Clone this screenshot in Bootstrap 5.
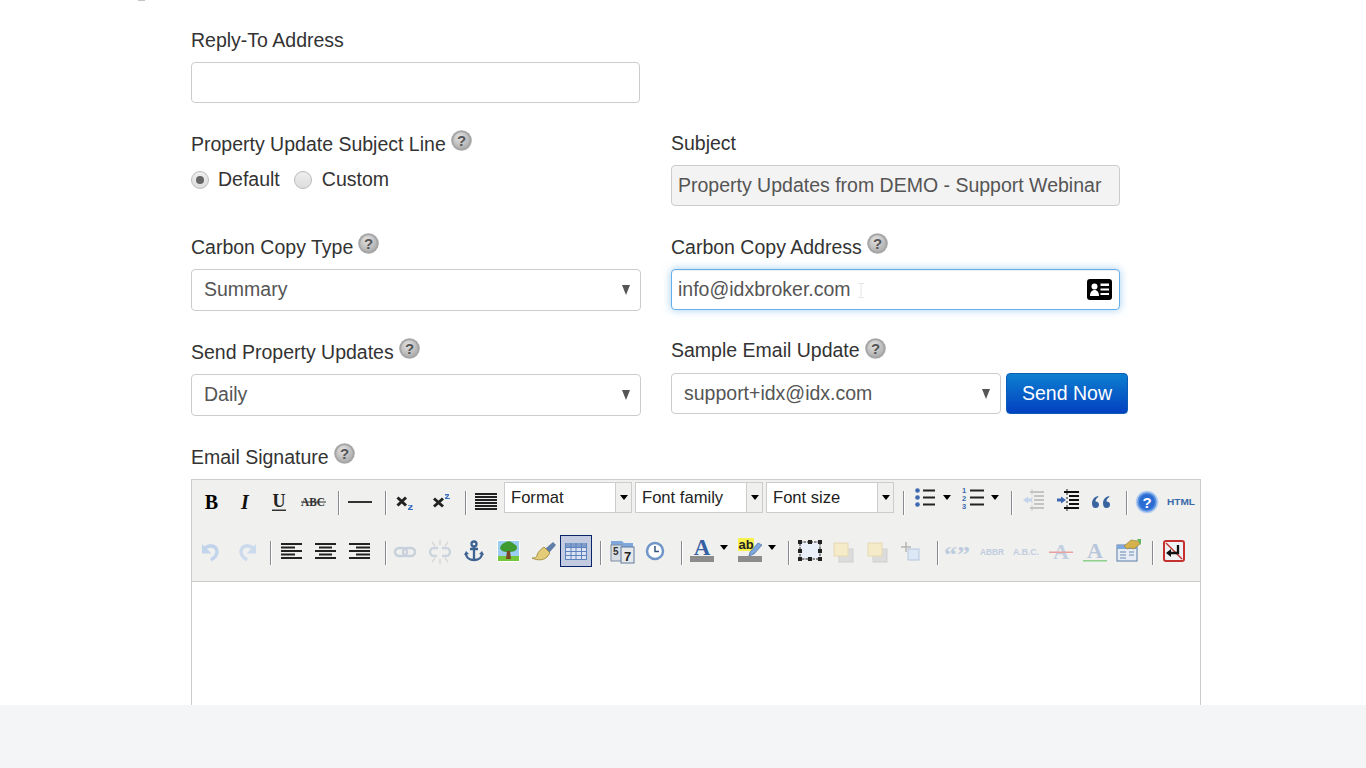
<!DOCTYPE html>
<html lang="en">
<head>
<meta charset="utf-8">
<title>Property Updates</title>
<link href="https://cdn.jsdelivr.net/npm/bootstrap@5.3.0/dist/css/bootstrap.min.css" rel="stylesheet">
<style>
html,body{height:100%;overflow:hidden}
body{font-family:"Liberation Sans",Arial,sans-serif;background:#f4f5f7;color:#333;font-size:19.5px}
.pg-main{position:relative;height:705px;overflow:hidden;background:#fff;padding:28px 0 0 191px}
.pg-crumb{position:absolute;left:138px;top:0;width:7px;height:1px;background:#c4c4c4}
.pg-foot{height:63px;background:#f4f5f7}
.fg-grid{display:grid;grid-template-columns:480px 470px;grid-template-rows:104px 103px 105px 105px}
.fg-up1{margin-top:-1px}
.fg-up2{margin-top:-2px}
.fg-label{display:flex;align-items:center;height:24px;font-size:19.5px;line-height:24px;color:#333;margin:0 0 10px;font-weight:400}
.fg-label-loose{margin-bottom:11px}
.fg-label-loose .qmark{margin-bottom:4px}
.qmark{width:21px;height:21px;margin:0 0 8px 5px;flex:none}
.fld{display:block;height:41px;width:449px;border:1px solid #ccc;border-radius:4px;background:#fff;color:#555;font-size:19.5px;line-height:39px;padding:0 6px}
.fld-ro{background:#f3f3f3}
.fld-focus{border-color:#66afe9;box-shadow:inset 0 1px 1px rgba(0,0,0,.075),0 0 8px rgba(102,175,233,.6);display:flex;align-items:center;justify-content:space-between;padding-right:7px}
.ibeam{margin-left:7px;vertical-align:-2px}
.sel{display:flex;align-items:center;justify-content:space-between;height:42px;width:450px;border:1px solid #ccc;border-radius:4px;background:#fff;color:#555;padding:0 10px 0 12px;font-size:19.5px}
.sel-tri{width:0;height:0;border-left:4.500px solid transparent;border-right:4.500px solid transparent;border-top:10px solid #555}
.sel-short{width:330px;height:41px}
.btn-send{width:122px;height:41px;margin:0 0 0 5px;padding:0 0 2px;border:1px solid #0a5cb4;border-radius:4px;background:linear-gradient(#0d7fd0,#0341c0);color:#fff;font-size:19.5px;line-height:36px}
.rad{display:inline-block;width:18px;height:18px;border-radius:50%;border:1px solid #bbb;background:linear-gradient(#eee,#ddd);flex:none;position:relative}
.rad-on::after{content:"";position:absolute;left:4px;top:4px;width:8px;height:8px;border-radius:50%;background:#666}
.rad-row{height:24px;margin-top:12px;font-size:19.5px;color:#333}
.rad-t{margin-left:9px}
.rad-t2{margin-left:10px}
.rad-2{margin-left:14px}
.ed-wrap{width:1010px;border:1px solid #ccc;background:#fff;height:400px}
.ed-bar{height:102px;background:#f0f0ee;border-bottom:1px solid #ccc;padding:2px 0 0 2px}
.ed-row{display:flex;align-items:flex-start;height:50px}
.tico{display:block;width:34px;height:30px;flex:none;margin-top:4px}
.tico text{font-family:"Liberation Serif",serif}
.tico .sans{font-family:"Liberation Sans",sans-serif}
.tico-33{width:33px}
.tico-32{width:32px}
.tico-a{background:#c2cbe0;outline:1px solid #0a246a;outline-offset:-1px;height:32px;margin-top:3px}
.tsep{width:2px;height:24px;margin:9px 3px 0 8px;flex:none;background:linear-gradient(90deg,#8a8a90 0 1px,#fff 1px)}
.tsep-6{margin-left:6px}
.tsep-12{margin-left:12px}
.tsel{display:flex;width:128px;height:31px;margin-right:3px;background:#fff;border:1px solid #ccc;font-size:16.6px;line-height:29px;color:#222;flex:none}
.tsel-t{flex:1;padding-left:6px}
.tsel-b{width:16px;background:#f0f0ee;border-left:1px solid #ccc;display:flex;align-items:center;justify-content:center}
.tcar{width:0;height:0;border-left:4.500px solid transparent;border-right:4.500px solid transparent;border-top:5px solid #000;flex:none}
.tcar-m{margin:13px 0 0 0}
.tcar-l{margin-left:1px}
.tsp-5{margin-left:5px}
</style>
</head>
<body>
<main class="pg-main">
  <span class="pg-crumb"></span>
  <div class="fg-grid">
    <div><label class="fg-label">Reply-To Address</label><div class="fld"></div></div>
    <div></div>
    <div><label class="fg-label">Property Update Subject Line<svg class="qmark"><use href="#q"/></svg></label>
      <div class="rad-row d-flex align-items-center"><span class="rad rad-on"></span><span class="rad-t">Default</span><span class="rad rad-2"></span><span class="rad-t2">Custom</span></div></div>
    <div class="fg-up1"><label class="fg-label">Subject</label><div class="fld fld-ro">Property Updates from DEMO - Support Webinar</div></div>
    <div><label class="fg-label">Carbon Copy Type<svg class="qmark"><use href="#q"/></svg></label><div class="sel"><span>Summary</span><span class="sel-tri"></span></div></div>
    <div><label class="fg-label">Carbon Copy Address<svg class="qmark"><use href="#q"/></svg></label><div class="fld fld-focus"><span>info@idxbroker.com<svg class="ibeam" width="6" height="15" viewBox="0 0 6 15"><path d="M0 .5h6M0 14.500h6M3 .5v14" stroke="#e6e6e6" fill="none"/></svg></span>
      <svg width="25" height="21" viewBox="0 0 25 21"><rect x="0" y="0" width="25" height="21" rx="3" fill="#000"/><circle cx="7.500" cy="7.500" r="3" fill="#fff"/><path d="M3 17c0-4 2-6 4.500-6s4.500 2 4.500 6z" fill="#fff"/><path d="M13.500 4.500h8.500v2.500h-8.500zM13.500 9.500h8.500v2h-8.500zM13.500 14h8.500v2h-8.500z" fill="#fff"/></svg></div></div>
    <div><label class="fg-label">Send Property Updates<svg class="qmark"><use href="#q"/></svg></label><div class="sel"><span>Daily</span><span class="sel-tri"></span></div></div>
    <div class="fg-up2"><label class="fg-label fg-label-loose">Sample Email Update<svg class="qmark"><use href="#q"/></svg></label><div class="d-flex"><div class="sel sel-short"><span>support+idx@idx.com</span><span class="sel-tri"></span></div><button class="btn btn-send" type="button">Send Now</button></div></div>
  </div>
  <label class="fg-label">Email Signature<svg class="qmark"><use href="#q"/></svg></label>
  <div class="ed-wrap">
    <div class="ed-bar">
      <div class="ed-row">
        <svg class="tico" viewBox="0 0 34 30"><text x="17.500" y="22.500" font-size="20" font-weight="700" text-anchor="middle" fill="#000">B</text></svg>
        <svg class="tico" viewBox="0 0 34 30"><text x="17" y="22.500" font-size="20" font-weight="700" font-style="italic" text-anchor="middle" fill="#111">I</text></svg>
        <svg class="tico" viewBox="0 0 34 30"><text x="17" y="21" font-size="18" font-weight="700" text-anchor="middle" fill="#222">U</text><path d="M10 23.500h14v1.500H10z" fill="#333"/></svg>
        <svg class="tico" viewBox="0 0 34 30"><text x="17" y="20" font-size="12.500" font-weight="700" text-anchor="middle" fill="#333" textLength="24" lengthAdjust="spacingAndGlyphs">ABC</text><path d="M5 15.500h25v1H5z" fill="#333"/></svg>
        <span class="tsep"></span>
        <svg class="tico" viewBox="0 0 34 30"><path d="M5 15h24v2H5z" fill="#333"/></svg>
        <span class="tsep"></span>
        <svg class="tico" viewBox="0 0 34 30"><path d="M7.500 11.500l8.500 8M16 11.500l-8.500 8" stroke="#222" stroke-width="3"/><path d="M18 19h4.500v1.500L20 23h3v1h-5v-1.200l3-3h-3z" fill="#3b6fc4"/></svg>
        <svg class="tico tico-33" viewBox="0 0 33 30"><path d="M10 12.500l9 8M19 12.500l-9 8" stroke="#222" stroke-width="3"/><path d="M21 8h4v1.500L23 12h3v1h-5v-1.200l3-2.300h-3z" fill="#3b6fc4"/></svg>
        <span class="tsep"></span>
        <svg class="tico" viewBox="0 0 34 30"><path d="M5 8h22M5 11h22M5 14h22M5 17h22M5 20h22M5 23h22" stroke="#222" stroke-width="2"/></svg>
        <div class="tsel"><span class="tsel-t">Format</span><span class="tsel-b"><span class="tcar"></span></span></div>
        <div class="tsel"><span class="tsel-t">Font family</span><span class="tsel-b"><span class="tcar"></span></span></div>
        <div class="tsel"><span class="tsel-t">Font size</span><span class="tsel-b"><span class="tcar"></span></span></div>
        <span class="tsep tsep-6"></span>
        <svg class="tico" viewBox="0 0 34 30"><g fill="#3c69b0"><circle cx="9.500" cy="4.500" r="2.300"/><circle cx="9.500" cy="11.500" r="2.300"/><circle cx="9.500" cy="18.500" r="2.300"/></g><path d="M15 4.500h12M15 11.500h12M15 18.500h12" stroke="#222" stroke-width="2"/></svg>
        <span class="tcar tcar-m tcar-l"></span>
        <svg class="tico tsp-5" viewBox="0 0 34 30"><text class="sans" x="6" y="7" font-size="7.500" font-weight="700" fill="#3c69b0">1</text><text class="sans" x="6" y="15" font-size="7.500" font-weight="700" fill="#3c69b0">2</text><text class="sans" x="6" y="23" font-size="7.500" font-weight="700" fill="#3c69b0">3</text><path d="M14 4.500h14M14 11.500h14M14 18.500h14" stroke="#222" stroke-width="2"/></svg>
        <span class="tcar tcar-m tcar-l"></span>
        <span class="tsep tsep-12"></span>
        <svg class="tico" viewBox="0 0 34 30"><g stroke="#c4c4c4" stroke-width="2"><path d="M14 6h14M18 10h10M18 14h10M18 18h10M14 22h14"/></g><path d="M16 3v24" stroke="#ccc" stroke-dasharray="2 2"/><path d="M7 14l5-3.500v2h4v3h-4v2z" fill="#c3d4ec"/></svg>
        <svg class="tico" viewBox="0 0 34 30"><g stroke="#111" stroke-width="2"><path d="M14 6h15M19 10h10M19 14h10M19 18h10M14 22h15"/></g><path d="M17 3v24" stroke="#222" stroke-dasharray="2 2"/><path d="M16 14l-5-3.500v2H7v3h4v2z" fill="#3c69b0"/></svg>
        <svg class="tico" viewBox="0 0 34 30"><path d="M14 10c-4 1-6 4-6 7 0 3 1 5 3.500 5s3.500-1.500 3.500-3.500-1.500-3-3.500-3c0-2 1-3.500 3-4.500zM25 10c-4 1-6 4-6 7 0 3 1 5 3.500 5s3.500-1.500 3.500-3.500-1.500-3-3.500-3c0-2 1-3.500 3-4.500z" fill="#38659f"/></svg>
        <span class="tsep"></span>
        <svg class="tico" viewBox="0 0 34 30"><circle cx="16" cy="16" r="10.500" fill="#5b93e0" stroke="#b4cdf0" stroke-width="1.500"/><circle cx="16" cy="16" r="8" fill="#2b6dd2"/><text class="sans" x="16" y="21.500" font-size="15" font-weight="700" text-anchor="middle" fill="#fff">?</text></svg>
        <svg class="tico" viewBox="0 0 34 30"><text class="sans" x="16" y="19" font-size="9.500" font-weight="700" text-anchor="middle" fill="#3a68a8" textLength="28" lengthAdjust="spacingAndGlyphs">HTML</text></svg>
      </div>
      <div class="ed-row">
        <svg class="tico" viewBox="0 0 34 30"><path d="M11 12c5-4 12-2 12 4 0 4-3 6-6 8" fill="none" stroke="#c2d4ec" stroke-width="3.500"/><path d="M8 8v9.500h9.500z" fill="#c2d4ec"/></svg>
        <svg class="tico" viewBox="0 0 34 30"><path d="M25 12c-5-4-12-2-12 4 0 4 3 6 6 8" fill="none" stroke="#ccdaee" stroke-width="3.500"/><path d="M28 8v9.500h-9.500z" fill="#ccdaee"/></svg>
        <span class="tsep"></span>
        <svg class="tico" viewBox="0 0 34 30"><path d="M6 8h21M6 11.500h14M6 15h21M6 18.500h14M6 22h21" stroke="#222" stroke-width="2"/></svg>
        <svg class="tico" viewBox="0 0 34 30"><path d="M6 8h21M10 11.500h13M6 15h21M10 18.500h13M6 22h21" stroke="#222" stroke-width="2"/></svg>
        <svg class="tico" viewBox="0 0 34 30"><path d="M6 8h21M13 11.500h14M6 15h21M13 18.500h14M6 22h21" stroke="#222" stroke-width="2"/></svg>
        <span class="tsep"></span>
        <svg class="tico" viewBox="0 0 34 30"><g fill="none" stroke="#c8d0db" stroke-width="2.500"><rect x="5" y="12" width="12" height="8" rx="4"/><rect x="13" y="12" width="12" height="8" rx="4"/></g></svg>
        <svg class="tico" viewBox="0 0 34 30"><g fill="none" stroke="#cdd4de" stroke-width="2.500"><path d="M14 12h-4a4 4 0 0 0 0 8h3"/><path d="M18 12h4a4 4 0 0 1 0 8h-4"/></g><path d="M16 4v5M16 23v5M8 6l3 4M24 6l-3 4M8 26l3-4M24 26l-3-4" stroke="#c8c8c8"/></svg>
        <svg class="tico" viewBox="0 0 34 30"><g fill="none" stroke="#3e6292" stroke-width="2.300"><circle cx="16" cy="8" r="2.500"/><path d="M16 10.500V23M12 13h8M8 17c0 5 4 7 8 7s8-2 8-7"/></g><path d="M6 19l2-4 3 3zM26 19l-2-4-3 3z" fill="#3e6292"/></svg>
        <svg class="tico" viewBox="0 0 34 30"><path d="M5 4h23v22H5z" fill="#fff"/><path d="M6 5h21v15H6z" fill="#9ccdf2"/><path d="M6 20h21v5H6z" fill="#74c63a"/><path d="M8 12c1-4 4-5 6-6 3-2 6 0 8 2 3 1 4 4 2 6-2 2-6 2-8 2s-7 0-8-4z" fill="#3f9a30"/><path d="M15 15h3l1 8h-5z" fill="#7a4a22"/></svg>
        <svg class="tico" viewBox="0 0 34 30"><path d="M19 13l8-7 3 3-7 8z" fill="#5f7fa8"/><path d="M18 11l6 6-3 4c-3 3-9 4-15 1 4 0 5-1 5-3 1-3 4-6 7-8z" fill="#e3cb78" stroke="#a89248"/></svg>
        <svg class="tico tico-32 tico-a" viewBox="0 0 32 32"><path d="M5 8h22v17H5z" fill="#dbe3f2"/><path d="M5 8h22v4H5z" fill="#7f9ccb"/><path d="M5.500 8v17M11 8v17M16 8v17M21.500 8v17M26.500 8v17M5 12.500h22M5 16.500h22M5 20.500h22M5 24.500h22" stroke="#5e82bd" fill="none"/></svg>
        <span class="tsep"></span>
        <svg class="tico" viewBox="0 0 34 30"><path d="M6 5h11l2 2h9v5H6z" fill="#7ea7dc"/><rect x="6" y="9" width="11" height="16" fill="#d8dde4" stroke="#7d8ba0"/><rect x="16" y="11" width="13" height="16" fill="#e6e8ea" stroke="#5f7a9f"/><text class="sans" x="8" y="19" font-size="10" font-weight="700" fill="#333">5</text><text class="sans" x="19" y="24.500" font-size="13" font-weight="700" fill="#222">7</text></svg>
        <svg class="tico" viewBox="0 0 34 30"><circle cx="16" cy="15" r="8" fill="#fff" stroke="#7095c8" stroke-width="2.500"/><path d="M16 10v5.500h4" stroke="#35557f" stroke-width="1.500" fill="none"/></svg>
        <span class="tsep"></span>
        <svg class="tico" viewBox="0 0 34 30"><text x="16" y="18.500" font-size="23" font-weight="700" text-anchor="middle" fill="#3460a4">A</text><path d="M4 20h24v6H4z" fill="#8c8c8c"/></svg>
        <span class="tcar tcar-m"></span>
        <svg class="tico tsp-5" viewBox="0 0 34 30"><path d="M5 2h16v13H5z" fill="#f6f14c"/><text class="sans" x="5.500" y="13" font-size="13" font-weight="700" fill="#222">ab</text><path d="M17 16l8-9 4 2-8 9-5 2z" fill="#7ea7dc" stroke="#4e6f9e" stroke-width=".7"/><path d="M5 20h24v6H5z" fill="#8c8c8c"/></svg>
        <span class="tcar tcar-m tcar-l"></span>
        <span class="tsep tsep-12"></span>
        <svg class="tico" viewBox="0 0 34 30"><path d="M7 6h20v17H7z" fill="#eaf0fa" stroke="#222" stroke-dasharray="2.500 1"/><g fill="#222"><rect x="5" y="4" width="4" height="4"/><rect x="15" y="4" width="4" height="4"/><rect x="25" y="4" width="4" height="4"/><rect x="5" y="13" width="4" height="4"/><rect x="25" y="13" width="4" height="4"/><rect x="5" y="21" width="4" height="4"/><rect x="15" y="21" width="4" height="4"/><rect x="25" y="21" width="4" height="4"/></g></svg>
        <svg class="tico" viewBox="0 0 34 30"><rect x="12" y="13" width="14" height="13" fill="#dcdcdc" stroke="#cfcfcf"/><rect x="7" y="7" width="14" height="13" fill="#f6ebc8" stroke="#e4d8b2"/></svg>
        <svg class="tico" viewBox="0 0 34 30"><rect x="12" y="13" width="14" height="13" fill="#dcdcdc" stroke="#cfcfcf"/><rect x="7" y="7" width="14" height="13" fill="#f6ebc8" stroke="#e4d8b2"/></svg>
        <svg class="tico" viewBox="0 0 34 30"><rect x="13" y="13" width="11" height="11" fill="#dde8f6" stroke="#b4c6de"/><path d="M6 11h10M11 6v10" stroke="#b5b5b5" stroke-width="1.500"/></svg>
        <span class="tsep"></span>
        <svg class="tico" viewBox="0 0 34 30"><text x="15" y="26" font-size="23" font-weight="700" text-anchor="middle" fill="#bccbdf" textLength="26" lengthAdjust="spacingAndGlyphs">“”</text></svg>
        <svg class="tico" viewBox="0 0 34 30"><text class="sans" x="16" y="19" font-size="8.500" font-weight="700" text-anchor="middle" fill="#c0cde0" textLength="24" lengthAdjust="spacingAndGlyphs">ABBR</text></svg>
        <svg class="tico" viewBox="0 0 34 30"><text class="sans" x="16" y="19" font-size="8.500" font-weight="700" text-anchor="middle" fill="#c0cde0" textLength="26" lengthAdjust="spacingAndGlyphs">A.B.C.</text></svg>
        <svg class="tico" viewBox="0 0 34 30"><text x="17" y="23" font-size="22" font-weight="700" text-anchor="middle" fill="#c3cfe0">A</text><path d="M5 15.500h24v1.500H5z" fill="#eba0a0"/></svg>
        <svg class="tico" viewBox="0 0 34 30"><text x="17" y="22" font-size="22" font-weight="700" text-anchor="middle" fill="#b8c6dc">A</text><path d="M5 24h24v1.500H5z" fill="#8fd08a"/></svg>
        <svg class="tico tico-32" viewBox="0 0 32 30"><rect x="5" y="9" width="20" height="16" fill="#e6edf6" stroke="#5a7ca8"/><path d="M5 9h20v4H5z" fill="#7ea7dc"/><path d="M8 16h6M8 19h6M8 22h6M17 16h5M17 19h5" stroke="#6f8bae"/><path d="M12 10l7-6 7 1 2 3-6 5-4-1-3 1z" fill="#d5b24c" stroke="#8a7a3a" stroke-width=".6"/><path d="M25 3l4 0 0 6z" fill="#5cb85c"/></svg>
        <span class="tsep"></span>
        <svg class="tico" viewBox="0 0 34 30"><rect x="7" y="5" width="20" height="20" rx="2" fill="#eef1f5" stroke="#c4312f" stroke-width="2"/><path d="M9 7l16 16" stroke="#c4312f" stroke-width="1.500"/><path d="M21 9v8H12" fill="none" stroke="#111" stroke-width="2.300"/><path d="M14 13l-5 4 5 4z" fill="#111"/></svg>
      </div>
    </div>
  </div>
</main>
<footer class="pg-foot"></footer>
<svg width="0" height="0" class="position-absolute"><defs>
<radialGradient id="qg" cx=".4" cy=".3" r=".8"><stop offset="0" stop-color="#e2e2e2"/><stop offset="1" stop-color="#a8a8a8"/></radialGradient>
<symbol id="q" viewBox="0 0 21 21"><circle cx="10.500" cy="10.500" r="10.300" fill="#a6a6a6"/><circle cx="10.500" cy="10.500" r="8.300" fill="url(#qg)"/><text x="10.500" y="16" font-family="Liberation Sans" font-size="15" font-weight="700" text-anchor="middle" fill="#555">?</text></symbol>
</defs></svg>
</body>
</html>
